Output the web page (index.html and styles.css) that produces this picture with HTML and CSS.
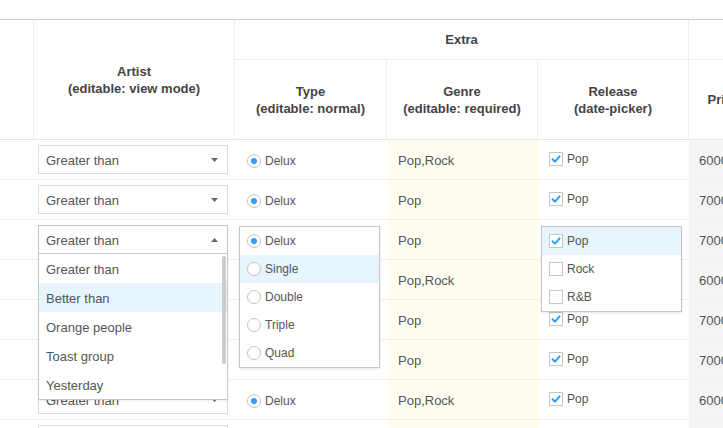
FILE: index.html
```html
<!DOCTYPE html>
<html>
<head>
<meta charset="utf-8">
<link rel="stylesheet" href="styles.css">
</head>
<body>
<div class="wrap">
<table class="grid">
<colgroup><col class="w-sel"><col class="w-artist"><col class="w-type"><col class="w-genre"><col class="w-rel"><col class="w-price"></colgroup>
<thead>
<tr class="h1">
  <th class="hb" rowspan="2"></th>
  <th class="hb" rowspan="2">Artist<br>(editable: view mode)</th>
  <th colspan="3">Extra</th>
  <th></th>
</tr>
<tr class="h2">
  <th class="hb">Type<br>(editable: normal)</th>
  <th class="hb">Genre<br>(editable: required)</th>
  <th class="hb">Release<br>(date-picker)</th>
  <th class="hb">Price</th>
</tr>
</thead>
<tbody>
<tr>
  <td></td>
  <td><div class="select"><span>Greater than</span><svg class="arr" width="7" height="4" viewBox="0 0 7 4"><path d="M0 0H7L3.5 4Z"/></svg></div></td>
  <td class="pad-type"><span class="opt"><span class="radio on"></span>Delux</span></td>
  <td class="genre">Pop,Rock</td>
  <td class="pad-rel"><span class="opt"><span class="cb on"><svg width="12" height="12" viewBox="0 0 12 12"><path d="M2.5 6.2L5 8.6L9.6 3.4"/></svg></span>Pop</span></td>
  <td class="price">6000</td>
</tr>
<tr>
  <td></td>
  <td><div class="select"><span>Greater than</span><svg class="arr" width="7" height="4" viewBox="0 0 7 4"><path d="M0 0H7L3.5 4Z"/></svg></div></td>
  <td class="pad-type"><span class="opt"><span class="radio on"></span>Delux</span></td>
  <td class="genre">Pop</td>
  <td class="pad-rel"><span class="opt"><span class="cb on"><svg width="12" height="12" viewBox="0 0 12 12"><path d="M2.5 6.2L5 8.6L9.6 3.4"/></svg></span>Pop</span></td>
  <td class="price">7000</td>
</tr>
<tr>
  <td></td>
  <td class="anchor">
    <div class="select open"><span>Greater than</span><svg class="arr" width="7" height="4" viewBox="0 0 7 4"><path d="M0 4H7L3.5 0Z"/></svg></div>
    <div class="dropdown">
      <div class="ditem">Greater than</div>
      <div class="ditem hl">Better than</div>
      <div class="ditem">Orange people</div>
      <div class="ditem">Toast group</div>
      <div class="ditem">Yesterday</div>
      <div class="thumb"></div>
    </div>
  </td>
  <td class="pad-type anchor">
    <div class="popup type-pop">
      <div class="pitem"><span class="radio on"></span>Delux</div>
      <div class="pitem hl"><span class="radio"></span>Single</div>
      <div class="pitem"><span class="radio"></span>Double</div>
      <div class="pitem"><span class="radio"></span>Triple</div>
      <div class="pitem"><span class="radio"></span>Quad</div>
    </div>
  </td>
  <td class="genre">Pop</td>
  <td class="pad-rel anchor">
    <div class="popup rel-pop">
      <div class="pitem hl"><span class="cb on"><svg width="12" height="12" viewBox="0 0 12 12"><path d="M2.5 6.2L5 8.6L9.6 3.4"/></svg></span>Pop</div>
      <div class="pitem"><span class="cb"></span>Rock</div>
      <div class="pitem"><span class="cb"></span>R&amp;B</div>
    </div>
  </td>
  <td class="price">7000</td>
</tr>
<tr>
  <td></td>
  <td><div class="select"><span>Greater than</span><svg class="arr" width="7" height="4" viewBox="0 0 7 4"><path d="M0 0H7L3.5 4Z"/></svg></div></td>
  <td class="pad-type"><span class="opt"><span class="radio on"></span>Delux</span></td>
  <td class="genre">Pop,Rock</td>
  <td class="pad-rel"><span class="opt"><span class="cb on"><svg width="12" height="12" viewBox="0 0 12 12"><path d="M2.5 6.2L5 8.6L9.6 3.4"/></svg></span>Pop</span></td>
  <td class="price">6000</td>
</tr>
<tr>
  <td></td>
  <td><div class="select"><span>Greater than</span><svg class="arr" width="7" height="4" viewBox="0 0 7 4"><path d="M0 0H7L3.5 4Z"/></svg></div></td>
  <td class="pad-type"><span class="opt"><span class="radio on"></span>Delux</span></td>
  <td class="genre">Pop</td>
  <td class="pad-rel"><span class="opt"><span class="cb on"><svg width="12" height="12" viewBox="0 0 12 12"><path d="M2.5 6.2L5 8.6L9.6 3.4"/></svg></span>Pop</span></td>
  <td class="price">7000</td>
</tr>
<tr>
  <td></td>
  <td><div class="select"><span>Greater than</span><svg class="arr" width="7" height="4" viewBox="0 0 7 4"><path d="M0 0H7L3.5 4Z"/></svg></div></td>
  <td class="pad-type"><span class="opt"><span class="radio on"></span>Delux</span></td>
  <td class="genre">Pop</td>
  <td class="pad-rel"><span class="opt"><span class="cb on"><svg width="12" height="12" viewBox="0 0 12 12"><path d="M2.5 6.2L5 8.6L9.6 3.4"/></svg></span>Pop</span></td>
  <td class="price">7000</td>
</tr>
<tr>
  <td></td>
  <td><div class="select"><span>Greater than</span><svg class="arr" width="7" height="4" viewBox="0 0 7 4"><path d="M0 0H7L3.5 4Z"/></svg></div></td>
  <td class="pad-type"><span class="opt"><span class="radio on"></span>Delux</span></td>
  <td class="genre">Pop,Rock</td>
  <td class="pad-rel"><span class="opt"><span class="cb on"><svg width="12" height="12" viewBox="0 0 12 12"><path d="M2.5 6.2L5 8.6L9.6 3.4"/></svg></span>Pop</span></td>
  <td class="price">6000</td>
</tr>
<tr>
  <td></td>
  <td><div class="select"><span>Greater than</span><svg class="arr" width="7" height="4" viewBox="0 0 7 4"><path d="M0 0H7L3.5 4Z"/></svg></div></td>
  <td class="pad-type"><span class="opt"><span class="radio on"></span>Delux</span></td>
  <td class="genre">Pop</td>
  <td class="pad-rel"><span class="opt"><span class="cb on"><svg width="12" height="12" viewBox="0 0 12 12"><path d="M2.5 6.2L5 8.6L9.6 3.4"/></svg></span>Pop</span></td>
  <td class="price">7000</td>
</tr>
</tbody>
</table>
</div>
</body>
</html>
```

FILE: styles.css
```css
* { box-sizing: border-box; }
html, body { margin: 0; padding: 0; background: #fff; }
body {
  font-family: "Liberation Sans", Arial, sans-serif;
  color: #555;
  overflow: hidden;
}
.wrap {
  width: 723px;
  height: 428px;
  overflow: hidden;
  padding-top: 19px;
}
.grid {
  width: 759px;
  table-layout: fixed;
  border-collapse: separate;
  border-spacing: 0;
  border-top: 1px solid #cfcfcf;
}
.w-sel { width: 34px; }
.w-artist { width: 201px; }
.w-type { width: 152px; }
.w-genre { width: 151px; }
.w-rel { width: 151px; }
.w-price { width: 70px; }

th {
  font-size: 13px;
  font-weight: bold;
  color: #444;
  line-height: 17px;
  text-align: center;
  vertical-align: middle;
  padding: 0;
  border-right: 1px solid #eeeeee;
  border-bottom: 1px solid #eeeeee;
}
th.hb { border-bottom-color: #e3e3e3; }
.h1 { height: 40px; }
.h2 { height: 80px; }

tbody tr { height: 40px; }
td {
  padding: 0;
  vertical-align: middle;
  font-size: 13px;
  color: #555;
  border-bottom: 1px solid #f0f0f0;
  white-space: nowrap;
}
td.anchor { position: relative; }
td.genre { background: #fffdef; padding: 2px 0 0 11px; }
td.price { background: #f4f4f4; padding: 2px 0 0 10px; }
td.pad-type { padding: 1px 0 0 12px; }
td.pad-rel { padding: 1px 0 0 11px; }

/* select */
.select {
  margin-left: 4px;
  width: 190px;
  height: 29px;
  border: 1px solid #dcdcdc;
  background: #fff;
  display: flex;
  align-items: center;
  justify-content: space-between;
  padding: 0 9px 0 7px;
  font-size: 13px;
  color: #555;
}
.select span { padding-top: 2px; }
.select.open { border-color: #c4c4c4; }
.arr { fill: #666; display: block; }

.dropdown {
  position: absolute;
  z-index: 5;
  left: 4px;
  top: 33px;
  width: 190px;
  height: 147px;
  border: 1px solid #c8c8c8;
  background: #fff;
  overflow: hidden;
  box-shadow: 0 1px 2px rgba(0,0,0,0.08);
}
.ditem {
  height: 29px;
  line-height: 31px;
  padding-left: 7px;
  font-size: 13px;
  color: #555;
}
.ditem.hl, .pitem.hl { background: #e6f4fc; }
.thumb {
  position: absolute;
  right: 1px;
  top: 2px;
  width: 4px;
  height: 108px;
  background: #cbcbcb;
  border-radius: 2px;
}

/* radio & checkbox */
.opt {
  display: inline-flex;
  align-items: center;
  font-size: 12px;
  color: #555;
}
.radio {
  width: 14px;
  height: 14px;
  border: 1px solid #c3c3c3;
  border-radius: 50%;
  background: #fff;
  margin-right: 4px;
  display: inline-flex;
  align-items: center;
  justify-content: center;
  flex: none;
}
.radio.on::after {
  content: "";
  width: 6px;
  height: 6px;
  border-radius: 50%;
  background: #2f9cf2;
}
.cb {
  width: 14px;
  height: 14px;
  border: 1px solid #c6c6c6;
  background: #fff;
  margin-right: 4px;
  display: inline-flex;
  align-items: center;
  justify-content: center;
  flex: none;
}
.cb svg path {
  fill: none;
  stroke: #2f9cf2;
  stroke-width: 2;
  stroke-linecap: round;
  stroke-linejoin: round;
}

.popup {
  position: absolute;
  z-index: 5;
  top: 6px;
  width: 141px;
  border: 1px solid #c6c6c6;
  background: #fff;
  box-shadow: 0 1px 2px rgba(0,0,0,0.1);
}
.type-pop { left: 4px; }
.rel-pop { left: 3px; }
.pitem {
  height: 28px;
  display: flex;
  align-items: center;
  padding-left: 7px;
  font-size: 12px;
  color: #555;
}
```
